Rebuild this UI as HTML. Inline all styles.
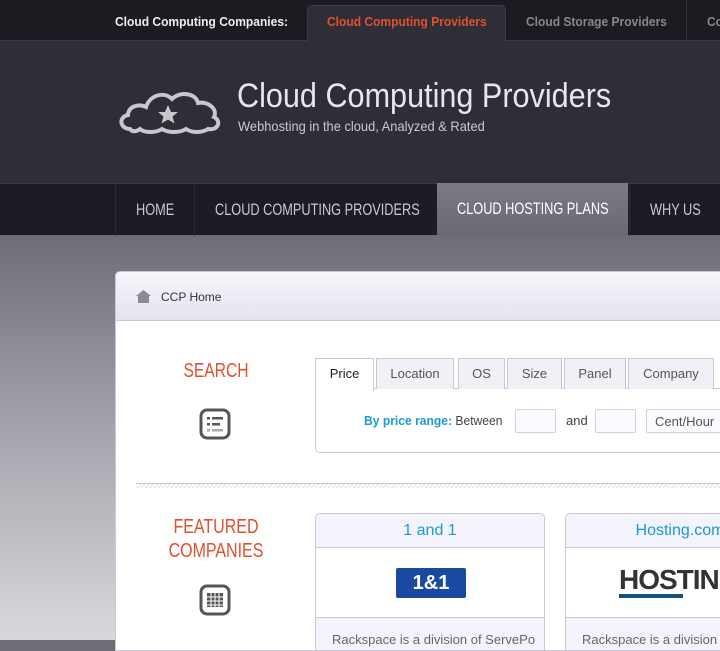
<!DOCTYPE html>
<html><head><meta charset="utf-8"><style>
*{margin:0;padding:0;box-sizing:border-box}
body{width:720px;height:640px;overflow:hidden;font-family:"Liberation Sans",sans-serif;background:linear-gradient(#6d6d77 235px,#a4a4ac 430px,#d8d8dd 640px);position:relative}
.s{display:inline-block;white-space:nowrap;transform-origin:left center}
.top{position:absolute;left:0;top:0;width:720px;height:41px;background:#1b1b22;border-bottom:1px solid #3a3a44}
.top span{position:absolute;top:14px;font-size:13px;font-weight:bold;white-space:nowrap;transform:scaleX(.925);transform-origin:left center}
.tab{position:absolute;left:307px;top:5px;width:199px;height:37px;background:#2e2e37;border-radius:5px 5px 0 0;border:1px solid #3c3c46;border-bottom:none}
.hdr{position:absolute;left:0;top:41px;width:720px;height:142px;background:#2e2e37}
.nav{position:absolute;left:0;top:183px;width:720px;height:52px;background:#1d1c26;border-top:1px solid #3a3a44}
.nav div{position:absolute;top:0;height:52px;line-height:52px;color:#c8c8d0;font-size:17px;border-left:1px solid #2c2c36;white-space:nowrap;overflow:hidden}
.nav div span{position:absolute;left:20px;top:0;transform:scaleX(.75);transform-origin:left center}
.panel{position:absolute;left:115px;top:271px;width:620px;height:380px;background:#fff;border:1px solid #c9c9d6;border-radius:5px 0 0 0;overflow:hidden}
.bc{height:49px;background:linear-gradient(#f5f5fb,#e4e4f0);border-bottom:1px solid #c9c9d8;border-radius:5px 0 0 0}
.red{color:#e0502f;font-size:20px;text-align:center;position:absolute;transform-origin:center}
.t{position:absolute;top:86px;height:31px;background:#f0f0f6;border:1px solid #c8c8d6;border-bottom:none;font-size:13px;color:#555;text-align:center;line-height:29px}
.inp{position:absolute;top:137px;width:41px;height:24px;border:1px solid #d0d0dc;border-radius:2px;background:#fafaff}
.card{position:absolute;top:241px;width:230px;height:150px;border:1px solid #c8c8d8;border-radius:5px 5px 0 0;overflow:hidden}
.card .h{height:34px;background:#f3f3fb;border-bottom:1px solid #c8c8d8;color:#1a9bd0;font-size:16px;text-align:center;line-height:34px}
.card .f{position:absolute;top:103px;left:0;right:0;bottom:0;background:#f3f3fb;border-top:1px solid #c8c8d8;font-size:13px;color:#666;padding:14px 16px;white-space:nowrap}
</style></head><body>
<div class="top">
<span style="left:115px;color:#eee">Cloud Computing Companies:</span>
<div class="tab"></div>
<span style="left:327px;color:#e0502f">Cloud Computing Providers</span>
<span style="left:526px;color:#888">Cloud Storage Providers</span>
<div style="position:absolute;left:686px;top:0;width:1px;height:40px;background:#333"></div>
<span style="left:707px;color:#888">Co</span>
</div>
<div class="hdr">
<svg style="position:absolute;left:118px;top:44px" width="104" height="50" viewBox="0 0 104 50"><path d="M12 44 C2 44 0 32 10 30 C10 22 20 18 28 22 C32 10 46 6 54 14 C62 6 78 8 80 18 C90 16 100 24 96 32 C104 36 100 46 90 44 C84 48 74 48 68 44 C62 48 50 48 44 44 C38 48 26 48 22 44 C18 47 14 47 12 44Z" fill="none" stroke="#c8c8cc" stroke-width="4"/><path d="M50 20 l3 7 7 0 -5.5 4.5 2 7 -6.5 -4 -6.5 4 2 -7 -5.5 -4.5 7 0z" fill="#c8c8cc"/></svg>
<div class="s" style="position:absolute;left:237px;top:36px;font-size:34px;color:#e6e6ec;transform:scaleX(.9)">Cloud Computing Providers</div>
<div class="s" style="position:absolute;left:238px;top:77px;font-size:14px;color:#c8c8d0;transform:scaleX(.92)">Webhosting in the cloud, Analyzed &amp; Rated</div>
</div>
<div class="nav">
<div style="left:115px;width:79px"><span>HOME</span></div>
<div style="left:194px;width:243px"><span>CLOUD COMPUTING PROVIDERS</span></div>
<div style="left:437px;width:191px;background:linear-gradient(#7a7a84,#6a6a74);color:#fff;border:none;top:-1px;height:53px"><span>CLOUD HOSTING PLANS</span></div>
<div style="left:629px;width:91px"><span>WHY US</span></div>
</div>
<div class="panel">
<div class="bc"><svg style="position:absolute;left:20px;top:17px" width="15" height="14" viewBox="0 0 15 14"><path d="M7.5 1 L0 7 L2 7 L2 14 L13 14 L13 7 L15 7Z" fill="#8a8a90"/></svg><span style="position:absolute;left:45px;top:18px;font-size:12px;color:#333">CCP Home</span></div>
<div class="red" style="left:40px;top:88px;width:120px;transform:scaleX(.78)">SEARCH</div>
<svg style="position:absolute;left:83px;top:136px" width="32" height="32" viewBox="0 0 32 32"><rect x="2" y="2" width="28" height="28" rx="6" fill="none" stroke="#555" stroke-width="3"/><rect x="8" y="9" width="3" height="2.5" fill="#555"/><rect x="13" y="9" width="11" height="2.5" fill="#555"/><rect x="8" y="15" width="3" height="2.5" fill="#555"/><rect x="13" y="15" width="8" height="2.5" fill="#555"/><rect x="8" y="21" width="3" height="2.5" fill="#aaa"/><rect x="13" y="21" width="11" height="2.5" fill="#aaa"/></svg>
<div style="position:absolute;left:199px;top:116px;width:430px;height:65px;border:1px solid #c8c8d6;border-radius:5px"></div>
<div class="t" style="left:199px;width:59px;background:#fff;height:33px;color:#222">Price</div>
<div class="t" style="left:260px;width:78px">Location</div>
<div class="t" style="left:342px;width:47px">OS</div>
<div class="t" style="left:391px;width:55px">Size</div>
<div class="t" style="left:448px;width:62px">Panel</div>
<div class="t" style="left:512px;width:86px">Company</div>
<div class="s" style="position:absolute;left:248px;top:141px;font-size:13px;transform:scaleX(.93)"><b style="color:#1a9bd0">By price range:</b> <span style="color:#444">Between</span></div>
<div class="inp" style="left:399px"></div>
<div style="position:absolute;left:450px;top:141px;font-size:13px;color:#444">and</div>
<div class="inp" style="left:479px"></div>
<div class="inp" style="left:530px;width:90px;font-size:13px;color:#555;padding:4px 8px">Cent/Hour</div>
<div style="position:absolute;left:20px;top:211px;width:600px;height:5px;border-top:1px solid #c8c8d8;background:repeating-linear-gradient(135deg,#ddd 0 1px,#fff 1px 3px)"></div>
<div class="red" style="left:20px;top:243px;width:160px;line-height:24px;transform:scaleX(.8)">FEATURED<br>COMPANIES</div>
<svg style="position:absolute;left:83px;top:312px" width="32" height="32" viewBox="0 0 32 32"><rect x="2" y="2" width="28" height="28" rx="6" fill="none" stroke="#555" stroke-width="3"/><rect x="8" y="9" width="16" height="14" fill="#555"/><path d="M8 13h16M8 17h16M8 21h16M12 9v14M16 9v14M20 9v14" stroke="#fff" stroke-width="1"/></svg>
<div class="card" style="left:199px"><div class="h">1 and 1</div>
<div style="position:absolute;left:80px;top:54px;width:70px;height:30px;background:#1a4aa0;border-radius:2px;color:#fff;font-weight:bold;font-size:20px;text-align:center;line-height:30px">1&amp;1</div><div class="f">Rackspace is a division of ServePo</div></div>
<div class="card" style="left:449px"><div class="h">Hosting.com</div>
<div style="position:absolute;left:53px;top:50px;font-size:28px;font-weight:bold;color:#333;letter-spacing:-1px">HOSTIN</div>
<div style="position:absolute;left:53px;top:80px;width:64px;height:4px;background:#15527f"></div><div class="f">Rackspace is a division o</div></div>
</div>
</body></html>
